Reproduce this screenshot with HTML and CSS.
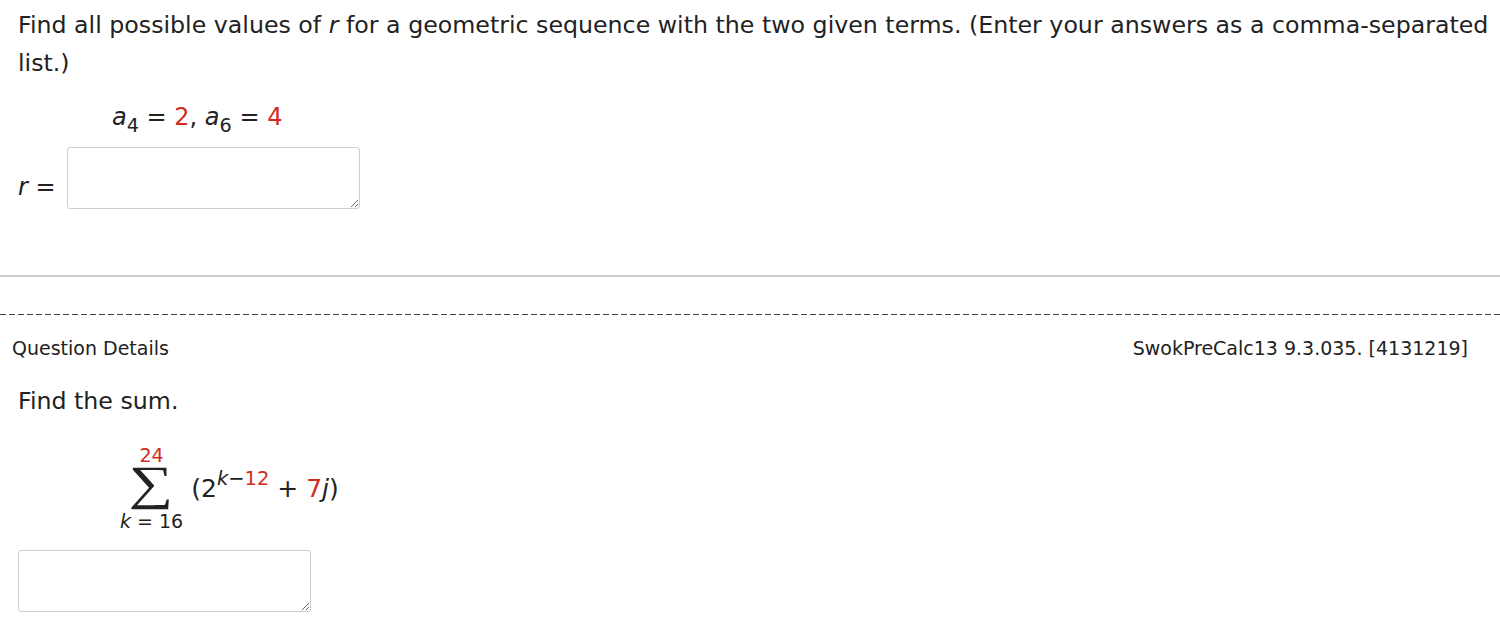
FILE: index.html
```html
<!DOCTYPE html>
<html lang="en">
<head>
    <meta charset="UTF-8">
    <title>Question</title>
    <link rel="stylesheet" href="styles.css">
</head>
<body>
    <div class="question">
        <p class="prompt">Find all possible values of <i>r</i> for a geometric sequence with the two given terms. (Enter your answers as a <span class="nowrap">comma-separated</span> list.)</p>
        <div class="equation">
            <i>a</i><sub>4</sub> = <span class="red">2</span>, <i>a</i><sub>6</sub> = <span class="red">4</span>
        </div>
        <div class="answer-row">
            <span class="label"><i>r</i> =</span>
            <textarea class="answer"></textarea>
        </div>
    </div>

    <hr class="solid">
    <hr class="dashed">

    <div class="details">
        <span>Question Details</span>
        <span>SwokPreCalc13 9.3.035. [4131219]</span>
    </div>

    <div class="question">
        <p class="prompt">Find the sum.</p>
        <div class="sum">
            <div class="sigma">
                <span class="limit red">24</span>
                <span class="sigma-sign">&sum;</span>
                <span class="limit"><i>k</i> = 16</span>
            </div>
            <div class="term">(2<sup><i>k</i>&minus;<span class="red">12</span></sup> + <span class="red">7</span><i>j</i>)</div>
        </div>
        <textarea class="answer"></textarea>
    </div>
</body>
</html>
```

FILE: styles.css
```css
body {
    font-family: "DejaVu Sans", Verdana, sans-serif;
    color: #222;
    background-color: #fff;
    margin: 0;
    padding: 0;
}

i {
    font-style: italic;
}

.red {
    color: #d22b22;
}

.nowrap {
    white-space: nowrap;
}

.question {
    padding: 0 0 0 18px;
    font-size: 24px;
}

.prompt {
    margin: 0;
    padding-top: 6px;
    line-height: 38px;
}

.question > .prompt:first-child {
    font-size: 23.7px;
}

.equation {
    margin: 17px 0 0 94px;
    line-height: 36px;
}

sub {
    font-size: 0.8em;
    vertical-align: -0.35em;
    line-height: 0;
}

sup {
    font-size: 0.78em;
    vertical-align: 0.6em;
    line-height: 0;
}

.answer-row {
    display: flex;
    align-items: flex-end;
    gap: 11px;
    margin-top: 12px;
}

.label {
    padding-bottom: 8px;
}

.answer {
    width: 293px;
    height: 62px;
    box-sizing: border-box;
    border: 1px solid #cfcfcf;
    border-radius: 3px;
    margin: 0;
    display: block;
}

hr {
    margin: 0;
    border: none;
}

.solid {
    margin-top: 66px;
    border-top: 2px solid #cccccc;
}

.dashed {
    margin-top: 37px;
    height: 1px;
    background-image: linear-gradient(to right, #444 6px, transparent 6px);
    background-size: 9px 1px;
}

.details {
    display: flex;
    justify-content: space-between;
    padding: 22px 32px 17px 12px;
    font-size: 19px;
    line-height: 22px;
}

.sum {
    display: flex;
    align-items: center;
    margin: 24px 0 18px 102px;
}

.sigma {
    display: flex;
    flex-direction: column;
    align-items: center;
    font-size: 19px;
    line-height: 22px;
}

.sigma-sign {
    font-family: "Liberation Serif", "DejaVu Serif", serif;
    font-size: 48px;
    line-height: 44px;
    height: 44px;
    transform: translateY(-5px) scaleX(1.3);
}

.term {
    margin-left: 8px;
    font-size: 25px;
}
```
